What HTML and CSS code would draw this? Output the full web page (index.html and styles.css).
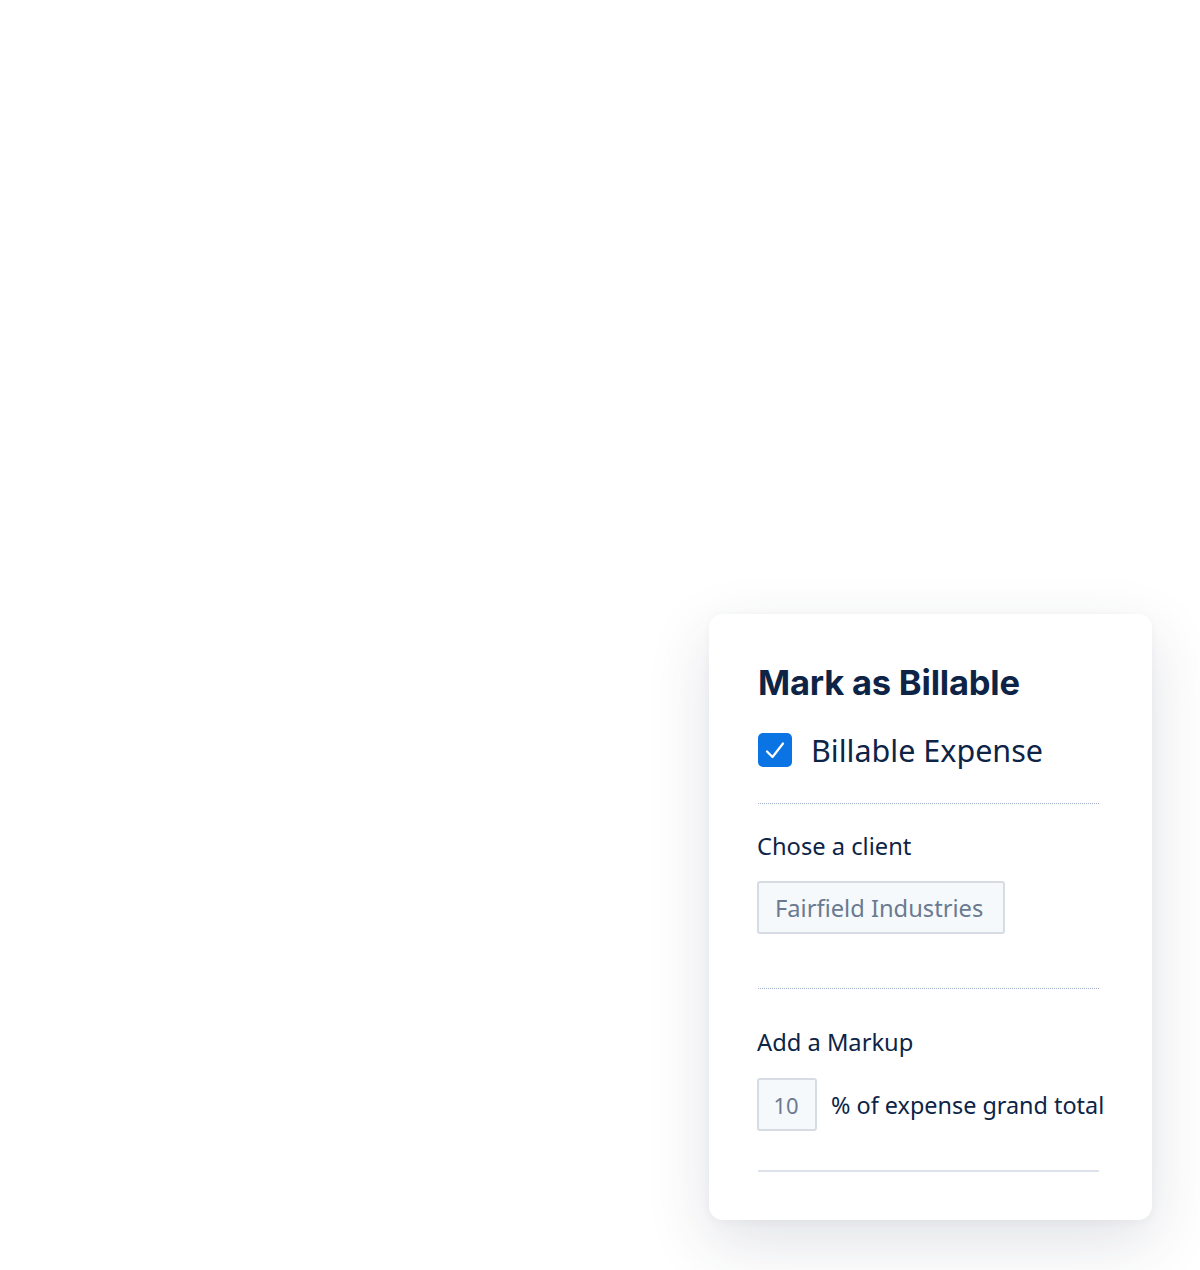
FILE: index.html
```html
<!DOCTYPE html>
<html>
<head>
<meta charset="utf-8">
<link rel="stylesheet" href="styles.css">
</head>
<body>
<div class="stage">
  <div class="card">
    <h2 class="title">Mark as Billable</h2>
    <div class="check-row">
      <span class="checkbox">
        <svg viewBox="0 0 34 34" width="34" height="34"><path d="M9 18.5 L14.5 24 L25 10.5" fill="none" stroke="#fff" stroke-width="2.2" stroke-linecap="round" stroke-linejoin="round"/></svg>
      </span>
      <span class="check-label">Billable Expense</span>
    </div>
    <div class="divider dotted"></div>
    <div class="section">
      <div class="label">Chose a client</div>
      <div class="input client">Fairfield Industries</div>
    </div>
    <div class="divider dotted"></div>
    <div class="section second">
      <div class="label">Add a Markup</div>
      <div class="markup-row">
        <div class="input num">10</div>
        <span class="markup-text">% of expense grand total</span>
      </div>
    </div>
    <div class="divider solid"></div>
  </div>
</div>
</body>
</html>
```

FILE: styles.css
```css
html, body {
  margin: 0;
  padding: 0;
  background: #fff;
}
body {
  font-family: "Noto Sans", "Open Sans", sans-serif;
  color: #0d2447;
}
.stage {
  width: 1200px;
  height: 1270px;
  display: flex;
  justify-content: flex-end;
  align-items: flex-start;
  padding: 614px 48px 0 0;
  box-sizing: border-box;
}
.card {
  width: 443px;
  height: 606px;
  box-sizing: border-box;
  background: #fff;
  border-radius: 14px;
  box-shadow: 0 22px 64px rgba(40, 50, 80, 0.14), 0 2px 10px rgba(40, 50, 80, 0.04);
  padding: 44px 52px 0 49px;
}
.title {
  margin: 0;
  font-family: Inter, "Noto Sans", sans-serif;
  font-weight: 700;
  font-size: 34.5px;
  letter-spacing: -0.2px;
  line-height: 50px;
  color: #0d2447;
}
.check-row {
  display: flex;
  align-items: center;
  margin-top: 25px;
}
.checkbox {
  width: 34px;
  height: 34px;
  border-radius: 5px;
  background: #0b74e5;
  display: flex;
  flex-shrink: 0;
}
.check-label {
  margin-left: 19px;
  font-size: 30.5px;
  line-height: 34px;
  color: #0d2447;
}
.divider {
  width: 341px;
  height: 0;
}
.divider.dotted {
  border-top: 1px dotted #9fb0c8;
}
.check-row + .divider {
  margin-top: 36px;
}
.divider.solid {
  border-top: 2px solid #dde1e9;
  margin-top: 39px;
}
.section {
  padding-top: 26px;
}
.section.second {
  padding-top: 37px;
}
.label {
  font-size: 23.7px;
  line-height: 32px;
  color: #0d2447;
  margin-left: -1px;
}
.input {
  box-sizing: border-box;
  height: 53px;
  border: 2px solid #d7dce4;
  border-radius: 3px;
  background: #f5f9fc;
  color: #6b7a90;
  font-size: 23.7px;
  display: flex;
  align-items: center;
  margin-left: -1px;
}
.input.client {
  margin-top: 19px;
  width: 248px;
  padding-left: 16px;
  margin-bottom: 54px;
}
.markup-row {
  display: flex;
  align-items: center;
  margin-top: 20px;
}
.input.num {
  width: 60px;
  flex-shrink: 0;
  justify-content: center;
  padding-right: 2px;
  font-size: 22px;
}
.markup-text {
  margin-left: 14px;
  font-size: 23.4px;
  color: #0d2447;
  white-space: nowrap;
}
```
